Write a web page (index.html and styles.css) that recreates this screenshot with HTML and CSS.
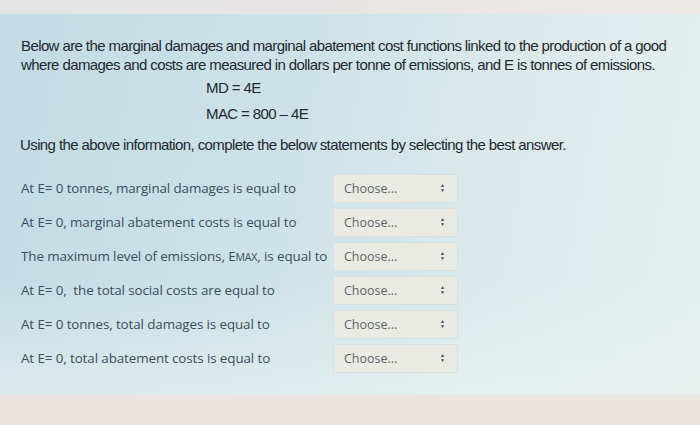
FILE: index.html
```html
<!DOCTYPE html>
<html>
<head>
<meta charset="utf-8">
<link rel="stylesheet" href="styles.css">
</head>
<body>
<div class="topbar"></div>
<main class="panel">
  <p class="intro">Below are the marginal damages and marginal abatement cost functions linked to the production of a good<br>where damages and costs are measured in dollars per tonne of emissions, and E is tonnes of emissions.</p>
  <p class="eq eq1">MD = 4E</p>
  <p class="eq eq2">MAC = 800 – 4E</p>
  <p class="instr">Using the above information, complete the below statements by selecting the best answer.</p>
  <div class="rows">
    <div class="row"><span class="label">At E= 0 tonnes, marginal damages is equal to</span><div class="select"><span>Choose...</span><span class="arrow">&#9650;<br>&#9660;</span></div></div>
    <div class="row"><span class="label">At E= 0, marginal abatement costs is equal to</span><div class="select"><span>Choose...</span><span class="arrow">&#9650;<br>&#9660;</span></div></div>
    <div class="row"><span class="label">The maximum level of emissions, E<span class="sc">MAX</span>, is equal to</span><div class="select"><span>Choose...</span><span class="arrow">&#9650;<br>&#9660;</span></div></div>
    <div class="row"><span class="label">At E= 0,&nbsp; the total social costs are equal to</span><div class="select"><span>Choose...</span><span class="arrow">&#9650;<br>&#9660;</span></div></div>
    <div class="row"><span class="label">At E= 0 tonnes, total damages is equal to</span><div class="select"><span>Choose...</span><span class="arrow">&#9650;<br>&#9660;</span></div></div>
    <div class="row"><span class="label">At E= 0, total abatement costs is equal to</span><div class="select"><span>Choose...</span><span class="arrow">&#9650;<br>&#9660;</span></div></div>
  </div>
</main>
</body>
</html>
```
FILE: styles.css
```css
html, body {
  margin: 0;
  padding: 0;
}
body {
  width: 700px;
  height: 425px;
  overflow: hidden;
  background: #ebe5e2;
  font-family: "Liberation Sans", sans-serif;
}
.topbar {
  height: 14px;
  background: linear-gradient(to right, #e4e4e4, #ece8e6);
}
.panel {
  height: 381px;
  box-sizing: border-box;
  padding: 22px 20px 0 21px;
  background:
    linear-gradient(to bottom, rgba(255,255,255,0) 70%, rgba(235,242,240,0.6) 100%),
    linear-gradient(100deg, #c3dbe5 0%, #cde2e8 40%, #dceaec 70%, #e5eeee 100%);
  color: #23282f;
}
.intro, .eq, .instr {
  margin: 0;
  font-size: 15px;
  line-height: 19px;
  letter-spacing: -0.6px;
  white-space: nowrap;
}
.eq {
  padding-left: 185px;
}
.eq1 { margin-top: 4px; }
.eq2 { margin-top: 7px; }
.instr {
  margin-top: 12px;
  margin-left: -1px;
}
.rows {
  margin-top: 19px;
  display: flex;
  flex-direction: column;
  gap: 4px;
}
.row {
  display: flex;
  align-items: center;
  height: 30px;
}
.label {
  width: 312px;
  font-family: "Open Sans", sans-serif;
  font-size: 13.4px;
  color: #3a4d5c;
  letter-spacing: -0.1px;
  white-space: nowrap;
}
.sc {
  font-size: 10.5px;
}
.select {
  width: 125px;
  height: 29px;
  box-sizing: border-box;
  padding: 0 12px 0 10px;
  background: #e9ebe3;
  border: 1px solid #d6e2e2;
  display: flex;
  align-items: center;
  justify-content: space-between;
  font-family: "Open Sans", sans-serif;
  font-size: 12.5px;
  color: #5e6468;
}
.arrow {
  font-size: 5px;
  line-height: 5px;
  color: #3e4448;
  text-align: center;
}
```
